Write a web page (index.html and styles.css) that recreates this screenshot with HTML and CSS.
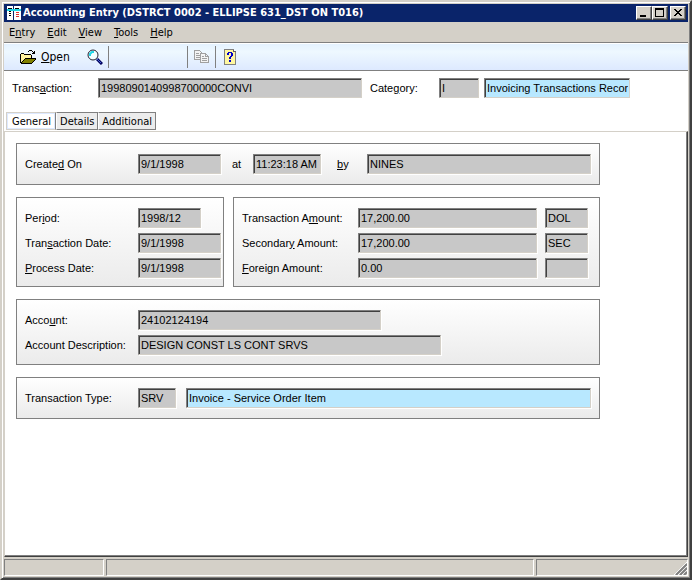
FILE: index.html
```html
<!DOCTYPE html>
<html lang="en">
<head>
    <meta charset="UTF-8">
    <meta name="viewport" content="width=device-width, initial-scale=1.0">
    <title>Accounting Entry</title>
    <link rel="stylesheet" href="styles.css">
</head>
<body>
    <div class="window">
        <header class="titlebar">
            <svg class="app-icon" width="14" height="14" viewBox="0 0 14 14" shape-rendering="crispEdges">
                <path fill="#fff" d="M0 0h6v14H0zM7 0h7v14H7z"/>
                <path fill="#000" d="M1 2h4v1H1zM2 5h2v1H2zM2 7h2v1H2zM2 9h2v1H2zM8 2h4v1H8z"/>
                <path fill="#e03030" d="M9 6h3v1H9zM9 8h3v1H9zM9 10h3v1H9z"/>
                <path fill="#20d8e8" d="M0 3h14v2H0z"/>
            </svg>
            <h1 class="title">Accounting Entry (DSTRCT 0002 - ELLIPSE 631_DST ON T016)</h1>
            <div class="window-buttons">
                <button class="window-button" aria-label="Minimize">
                    <svg width="12" height="10" viewBox="0 0 12 10" shape-rendering="crispEdges"><path d="M2 7h6v2H2z"/></svg>
                </button>
                <button class="window-button" aria-label="Maximize">
                    <svg width="12" height="10" viewBox="0 0 12 10" shape-rendering="crispEdges"><path fill-rule="evenodd" d="M1 0h9v9H1zM2 2h7v6H2z"/></svg>
                </button>
                <button class="window-button close" aria-label="Close">
                    <svg width="12" height="10" viewBox="0 0 12 10" shape-rendering="crispEdges"><path d="M2 1h2v1h1v1h2V2h1V1h2v1H9v1H8v1H7v1h1v1h1v1h1v1H8V7H7V6H5v1H4v1H2V7h1V6h1V5h1V4H4V3H3V2H2z"/></svg>
                </button>
            </div>
        </header>

        <nav class="menubar">
            <button class="menu">E<u>n</u>try</button>
            <button class="menu"><u>E</u>dit</button>
            <button class="menu"><u>V</u>iew</button>
            <button class="menu"><u>T</u>ools</button>
            <button class="menu"><u>H</u>elp</button>
        </nav>

        <div class="toolbar">
            <button class="tool open">
                <svg width="16" height="14" viewBox="0 0 16 14" shape-rendering="crispEdges">
                    <path fill="#fff3a0" d="M1 4h3v1h7v3H5v1H4v1H3v1H2v1H1z"/>
                    <path fill="#808000" d="M5 9h10v1h-1v1h-1v1h-1v1H2v-1h1v-1h1v-1h1z"/>
                    <path d="M1 3h3v1H1zM0 4h1v9H0zM4 4h7v1H4zM11 5h1v3h-1zM5 8h11v1H5zM4 9h1v1H4zM3 10h1v1H3zM2 11h1v1H2zM1 12h1v1H1zM1 13h11v1H1zM15 9h1v1h-1zM14 10h1v1h-1zM13 11h1v1h-1zM12 12h1v1h-1zM9 0h3v1H9zM8 1h1v1H8zM12 1h1v1h-1zM14 1h1v3h-3V3h1V2h1z"/>
                </svg>
                <span><u>O</u>pen</span>
            </button>
            <button class="tool search" aria-label="Search">
                <svg width="16" height="16" viewBox="0 0 16 16">
                    <circle cx="6" cy="6" r="5" fill="#f4ffff" stroke="#202030"/>
                    <path fill="none" stroke="#20d8e8" stroke-width="2" d="M3 7V5l2-2h2"/>
                    <path stroke="#000060" stroke-width="3" d="M10 10l5 5"/>
                    <path stroke="#4060d0" stroke-width="1" d="M10 10l4 4"/>
                </svg>
            </button>
            <span class="separator"></span>
            <span class="toolbar-gap"></span>
            <span class="separator"></span>
            <button class="tool" aria-label="Copy" disabled>
                <svg width="16" height="14" viewBox="0 0 16 14" shape-rendering="crispEdges">
                    <path fill="#f4f4f4" stroke="#a0a0a0" d="M.5.5h5l3 3v6h-8z"/>
                    <path stroke="#a0a0a0" d="M2 3.5h3M2 5.5h4M2 7.5h4"/>
                    <path fill="#f4f4f4" stroke="#a0a0a0" d="M6.5 3.5h5l3 3v6h-8zM11.5 3.5v3h3"/>
                    <path stroke="#a0a0a0" d="M8 6.5h2M8 8.5h5M8 10.5h5"/>
                </svg>
            </button>
            <span class="separator"></span>
            <button class="tool help" aria-label="Help">
                <svg width="12" height="16" viewBox="0 0 12 16" shape-rendering="crispEdges">
                    <path fill="#fff7a0" stroke="#808080" d="M.5.5h9l2 2v13H.5z"/>
                    <path fill="#fff" stroke="#606060" d="M9.5.5v2h2"/>
                    <path fill="#0000c8" d="M4 3h4v1h1v3H8v1H7v2H5V8h1V7h1V4H5v2H3V4h1zM5 11h2v2H5z"/>
                </svg>
            </button>
        </div>

        <main class="content">
            <div class="summary">
                <label class="summary-label" for="transaction">Trans<u>a</u>ction:</label>
                <input class="field transaction" id="transaction" value="1998090140998700000CONVI" readonly>
                <label class="category-label" for="category">Cate<u>g</u>ory:</label>
                <input class="field category" id="category" value="I" readonly>
                <input class="field info category-name" aria-label="Category name" value="Invoicing Transactions Recor" readonly>
            </div>

            <div class="tabs" role="tablist">
                <button class="tab active" role="tab" aria-selected="true">General</button>
                <button class="tab" role="tab" aria-selected="false">Details</button>
                <button class="tab" role="tab" aria-selected="false">Additional</button>
            </div>

            <section class="panel" role="tabpanel">
                <div class="group created">
                    <label for="created">Create<u>d</u> On</label>
                    <input class="field" id="created" value="9/1/1998" readonly>
                    <label for="time">at</label>
                    <input class="field" id="time" value="11:23:18 AM" readonly>
                    <label for="user"><u>b</u>y</label>
                    <input class="field" id="user" value="NINES" readonly>
                </div>

                <div class="group-row">
                    <div class="group dates">
                        <label for="period">Per<u>i</u>od:</label>
                        <input class="field period" id="period" value="1998/12" readonly>
                        <label for="transaction-date">Tran<u>s</u>action Date:</label>
                        <input class="field" id="transaction-date" value="9/1/1998" readonly>
                        <label for="process-date"><u>P</u>rocess Date:</label>
                        <input class="field" id="process-date" value="9/1/1998" readonly>
                    </div>
                    <div class="group amounts">
                        <label for="transaction-amount">Transaction A<u>m</u>ount:</label>
                        <input class="field" id="transaction-amount" value="17,200.00" readonly>
                        <input class="field" aria-label="Transaction currency" value="DOL" readonly>
                        <label for="secondary-amount">Secondar<u>y</u> Amount:</label>
                        <input class="field" id="secondary-amount" value="17,200.00" readonly>
                        <input class="field" aria-label="Secondary currency" value="SEC" readonly>
                        <label for="foreign-amount"><u>F</u>oreign Amount:</label>
                        <input class="field" id="foreign-amount" value="0.00" readonly>
                        <input class="field" aria-label="Foreign currency" value="" readonly>
                    </div>
                </div>

                <div class="group account">
                    <label for="account">Acco<u>u</u>nt:</label>
                    <input class="field account-number" id="account" value="24102124194" readonly>
                    <label for="description">Account Description:</label>
                    <input class="field account-description" id="description" value="DESIGN CONST LS CONT SRVS" readonly>
                </div>

                <div class="group type">
                    <label for="type">Transaction Type:</label>
                    <input class="field" id="type" value="SRV" readonly>
                    <input class="field info" aria-label="Type name" value="Invoice - Service Order Item" readonly>
                </div>
            </section>
        </main>

        <footer class="statusbar">
            <div class="status"></div>
            <div class="status"></div>
            <div class="status grip">
                <svg width="13" height="13" viewBox="0 0 13 13">
                    <path stroke="#fff" d="M0 13L13 0M4 13l9-9M8 13l5-5"/>
                    <path stroke="#808080" stroke-width="2" d="M2 13L13 2M6 13l7-7M10 13l3-3"/>
                </svg>
            </div>
        </footer>
    </div>
</body>
</html>
```
FILE: styles.css
```css
* {
    box-sizing: border-box;
}
body {
    margin: 0;
    font-family: "Liberation Sans", Arial, sans-serif;
    font-size: 11px;
    color: #000;
}
button {
    font-family: "DejaVu Sans Condensed", Tahoma, sans-serif;
    font-size: 11px;
    color: #000;
    padding: 0;
    border: none;
    background: none;
}
svg {
    display: block;
}
.window {
    display: flex;
    flex-direction: column;
    min-height: 100vh;
    padding: 2px;
    background-color: #d4d0c8;
    border: 2px solid;
    border-color: #d4d0c8 #404040 #404040 #d4d0c8;
    box-shadow: inset 1px 1px #fff, inset -1px -1px #808080;
}

/* title bar */
.titlebar {
    display: flex;
    align-items: center;
    height: 18px;
    padding: 0 2px 0 3px;
    background-color: #0a246a;
}
.title {
    flex: 1;
    margin: 0 0 0 2px;
    font-family: "DejaVu Sans Condensed", Tahoma, sans-serif;
    font-size: 11px;
    line-height: 18px;
    color: #fff;
    white-space: nowrap;
}
.window-buttons {
    display: flex;
}
.window-button {
    width: 16px;
    height: 14px;
    padding: 1px;
    background-color: #d4d0c8;
    border: 1px solid;
    border-color: #fff #404040 #404040 #fff;
    box-shadow: inset -1px -1px #808080;
}
.window-button.close {
    margin-left: 2px;
}

/* menu and toolbar */
.menubar {
    display: flex;
    gap: 12px;
    height: 21px;
    padding: 0 5px;
    border-bottom: 1px solid #808080;
}
.toolbar {
    display: flex;
    align-items: center;
    height: 28px;
    background: linear-gradient(#e4f2ff, #eef8ff 30%, #dde9ff);
    border-top: 1px solid #fff;
    border-bottom: 1px solid #808080;
}
.open {
    display: flex;
    align-items: center;
    gap: 5px;
    margin-left: 16px;
    font-size: 12px;
}
.search {
    margin: 0 5px 0 17px;
}
.separator {
    width: 1px;
    height: 22px;
    background-color: #808080;
}
.toolbar-gap {
    width: 78px;
}
.separator + .tool {
    margin: 0 5px 0 6px;
}
.separator + .help {
    margin-left: 8px;
}

/* fields */
.field {
    width: 100%;
    min-width: 0;
    height: 20px;
    padding: 0 1px 1px 2px;
    font-family: "Liberation Sans", Arial, sans-serif;
    font-size: 11px;
    color: #000;
    background-color: #c8c8c8;
    border: 1px solid;
    border-color: #808080 #d4d0c8 #d4d0c8 #808080;
    border-radius: 0;
    box-shadow: inset 1px 1px #404040, 1px 1px #fff;
    outline: none;
}
.field.info {
    background-color: #b8e8ff;
}
label {
    white-space: nowrap;
}

.content {
    display: flex;
    flex-direction: column;
    flex: 1;
    background-color: #fff;
}
.summary {
    display: grid;
    grid-template-columns: 86px minmax(0, 264px) 77px 40px 151px;
    align-items: center;
    padding: 7px 8px 14px;
}
.category-label {
    padding-left: 8px;
}
.category-name {
    width: 146px;
    margin-left: 5px;
}

/* tabs */
.tabs {
    display: flex;
    padding: 0 2px;
}
.tab {
    height: 18px;
    padding: 0 3px;
    background-color: #ececec;
    border: 1px solid #808080;
    border-left-color: #fff;
}
.tab.active {
    padding: 0 4px 0 5px;
    background-color: #fff;
    border-color: #d4d0c8 #808080 #d4d0c8 #d4d0c8;
    box-shadow: inset 0 0 0 1px #dde9ff;
}
.panel {
    flex: 1;
    padding: 11px;
    margin-top: 1px;
    border: 1px solid;
    border-color: #d4d0c8 #404040 #404040 #d4d0c8;
    box-shadow: inset -1px -1px #808080;
}

.group {
    display: grid;
    align-items: center;
    row-gap: 5px;
    max-width: 584px;
    padding: 10px 8px;
    background: linear-gradient(#fff, #ebebeb);
    border: 1px solid #808080;
}
.group,
.group-row {
    margin-bottom: 12px;
}
.group-row {
    display: flex;
    gap: 9px;
    max-width: 584px;
}
.group-row .group {
    margin-bottom: 0;
    padding-bottom: 8px;
}
.created {
    grid-template-columns: 113px 83px 32px 68px 46px 1fr;
}
.created label:not(:first-child) {
    padding-left: 11px;
}
.created label:nth-of-type(3) {
    padding-left: 16px;
}
.dates {
    width: 208px;
    padding-right: 2px;
    grid-template-columns: 113px 1fr;
}
.period {
    width: 63px;
}
.amounts {
    flex: 1;
    grid-template-columns: 108px 1fr 43px;
    column-gap: 8px;
    padding-right: 11px;
}
.account {
    grid-template-columns: 113px 1fr;
    padding-bottom: 9px;
}
.account-number {
    max-width: 243px;
}
.account-description {
    max-width: 303px;
}
.type {
    grid-template-columns: 113px 38px 1fr;
}
.type .info {
    width: auto;
    margin-left: 10px;
}

/* status bar */
.statusbar {
    display: grid;
    grid-template-columns: 100px 1fr 152px;
    gap: 2px;
    padding-top: 2px;
}
.status {
    height: 17px;
    border: 1px solid;
    border-color: #808080 #fff #fff #808080;
}
.grip {
    display: flex;
    justify-content: flex-end;
    align-items: flex-end;
}
```
